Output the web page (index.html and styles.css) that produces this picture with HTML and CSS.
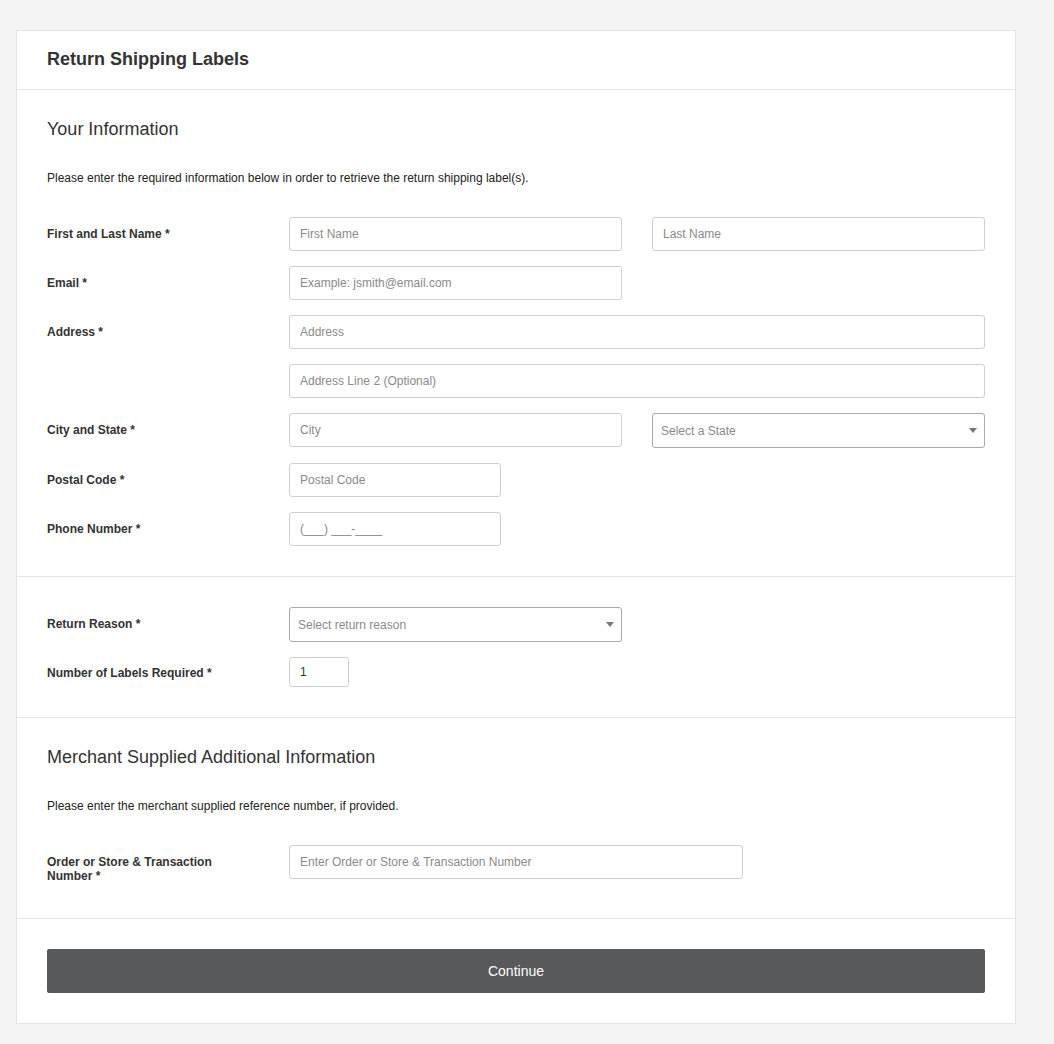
FILE: index.html
```html
<!DOCTYPE html>
<html lang="en">
<head>
    <meta charset="UTF-8">
    <meta name="viewport" content="width=device-width, initial-scale=1.0">
    <title>Return Shipping Labels</title>
    <link rel="stylesheet" href="styles.css">
</head>
<body>
    <div class="card">
        <div class="card-header">
            <h1>Return Shipping Labels</h1>
        </div>

        <div class="section">
            <h2>Your Information</h2>
            <p class="intro">Please enter the required information below in order to retrieve the return shipping label(s).</p>

            <div class="row">
                <label class="label">First and Last Name *</label>
                <div class="fields">
                    <input class="input half" type="text" placeholder="First Name">
                    <input class="input half" type="text" placeholder="Last Name">
                </div>
            </div>
            <div class="row">
                <label class="label">Email *</label>
                <div class="fields">
                    <input class="input half" type="text" placeholder="Example: jsmith@email.com">
                </div>
            </div>
            <div class="row">
                <label class="label">Address *</label>
                <div class="fields">
                    <input class="input full" type="text" placeholder="Address">
                </div>
            </div>
            <div class="row">
                <span class="label"></span>
                <div class="fields">
                    <input class="input full" type="text" placeholder="Address Line 2 (Optional)">
                </div>
            </div>
            <div class="row">
                <label class="label">City and State *</label>
                <div class="fields">
                    <input class="input half" type="text" placeholder="City">
                    <div class="select-wrap half">
                        <select class="select">
                            <option>Select a State</option>
                        </select>
                    </div>
                </div>
            </div>
            <div class="row">
                <label class="label">Postal Code *</label>
                <div class="fields">
                    <input class="input short" type="text" placeholder="Postal Code">
                </div>
            </div>
            <div class="row">
                <label class="label">Phone Number *</label>
                <div class="fields">
                    <input class="input short" type="text" placeholder="(___) ___-____">
                </div>
            </div>
        </div>

        <div class="section section-return">
            <div class="row">
                <label class="label">Return Reason *</label>
                <div class="fields">
                    <div class="select-wrap half">
                        <select class="select">
                            <option>Select return reason</option>
                        </select>
                    </div>
                </div>
            </div>
            <div class="row">
                <label class="label label-small">Number of Labels Required *</label>
                <div class="fields">
                    <input class="input number" type="number" value="1">
                </div>
            </div>
        </div>

        <div class="section section-merchant">
            <h2>Merchant Supplied Additional Information</h2>
            <p class="intro">Please enter the merchant supplied reference number, if provided.</p>

            <div class="row">
                <label class="label">Order or Store &amp; Transaction<br>Number *</label>
                <div class="fields">
                    <input class="input wide" type="text" placeholder="Enter Order or Store &amp; Transaction Number">
                </div>
            </div>
        </div>

        <div class="card-footer">
            <button class="continue" type="button">Continue</button>
        </div>
    </div>
</body>
</html>
```

FILE: styles.css
```css
body {
    font-family: "Liberation Sans", Arial, sans-serif;
    background-color: #f4f4f4;
    color: #333;
    margin: 0;
    padding: 30px 0 20px 16px;
}

.card {
    width: 1000px;
    box-sizing: border-box;
    background-color: #fff;
    border: 1px solid #e3e3e3;
}

.card-header {
    padding: 18px 30px 20px;
    border-bottom: 1px solid #e3e3e3;
}

.card-header h1 {
    margin: 0;
    font-size: 18px;
    line-height: 20px;
    font-weight: bold;
    color: #333;
}

.section {
    padding: 29px 30px 30px;
    border-bottom: 1px solid #e3e3e3;
}

.section h2 {
    margin: 0;
    font-size: 18px;
    line-height: 20px;
    font-weight: normal;
    color: #333;
}

.intro {
    margin: 31px 0 31px;
    font-size: 12px;
    line-height: 16px;
    color: #222;
}

.section-return {
    padding-top: 30px;
}

.section-merchant {
    padding-bottom: 35px;
}

.row {
    display: grid;
    grid-template-columns: 242px 1fr;
    margin-bottom: 15px;
}

.row:last-child {
    margin-bottom: 0;
}

.label {
    font-size: 12px;
    line-height: 14px;
    font-weight: bold;
    color: #333;
    padding-top: 10px;
}

.label-small {
    padding-top: 9px;
}

.fields {
    display: flex;
    gap: 30px;
}

.input {
    height: 34px;
    box-sizing: border-box;
    border: 1px solid #cfcfcf;
    border-radius: 3px;
    padding: 0 10px;
    font-family: inherit;
    font-size: 12px;
    color: #333;
    background-color: #fff;
    outline: none;
}

.input::placeholder {
    color: #8a8a8a;
}

.half {
    width: 333px;
}

.full {
    width: 100%;
}

.short {
    width: 212px;
}

.wide {
    width: 454px;
}

.number {
    width: 60px;
    height: 30px;
    -moz-appearance: textfield;
}

.number::-webkit-outer-spin-button,
.number::-webkit-inner-spin-button {
    -webkit-appearance: none;
    margin: 0;
}

.select-wrap {
    position: relative;
}

.select-wrap::after {
    content: "";
    position: absolute;
    right: 8px;
    top: 15px;
    border-left: 4px solid transparent;
    border-right: 4px solid transparent;
    border-top: 5px solid #777;
    pointer-events: none;
}

.select {
    width: 100%;
    height: 35px;
    box-sizing: border-box;
    border: 1px solid #a9a9a9;
    border-radius: 3px;
    padding: 0 8px;
    font-family: inherit;
    font-size: 12px;
    color: #8a8a8a;
    background-color: #fff;
    -webkit-appearance: none;
    appearance: none;
    outline: none;
}

.card-footer {
    padding: 30px;
}

.continue {
    width: 100%;
    height: 44px;
    border: none;
    border-radius: 2px;
    background-color: #58595b;
    color: #fff;
    font-family: inherit;
    font-size: 14px;
    cursor: pointer;
}
```
